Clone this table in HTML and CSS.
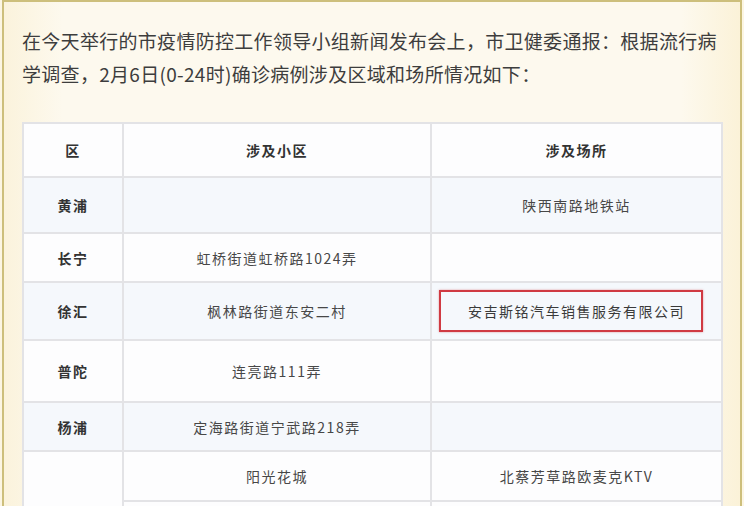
FILE: index.html
```html
<!DOCTYPE html>
<html lang="zh-CN">
<head>
    <meta charset="UTF-8">
    <meta name="viewport" content="width=device-width, initial-scale=1.0">
    <title>确诊病例涉及区域和场所</title>
    <link rel="stylesheet" href="styles.css">
</head>
<body>
    <!-- Framed article -->
    <div class="frame">
        <p class="intro">在今天举行的市疫情防控工作领导小组新闻发布会上，市卫健委通报：根据流行病学调查，2月6日(0-24时)确诊病例涉及区域和场所情况如下：</p>

        <table class="cases">
            <tr class="row-head">
                <th class="col-district">区</th>
                <th class="col-area">涉及小区</th>
                <th class="col-place">涉及场所</th>
            </tr>
            <tr class="row-1 alt">
                <td class="district">黄浦</td>
                <td></td>
                <td>陕西南路地铁站</td>
            </tr>
            <tr class="row-2">
                <td class="district">长宁</td>
                <td>虹桥街道虹桥路1024弄</td>
                <td></td>
            </tr>
            <tr class="row-3 alt">
                <td class="district">徐汇</td>
                <td>枫林路街道东安二村</td>
                <td><span class="marked">安吉斯铭汽车销售服务有限公司</span></td>
            </tr>
            <tr class="row-4">
                <td class="district">普陀</td>
                <td>连亮路111弄</td>
                <td></td>
            </tr>
            <tr class="row-5 alt">
                <td class="district">杨浦</td>
                <td>定海路街道宁武路218弄</td>
                <td></td>
            </tr>
            <tr class="row-6">
                <td class="district" rowspan="2"></td>
                <td>阳光花城</td>
                <td>北蔡芳草路欧麦克KTV</td>
            </tr>
            <tr class="row-7">
                <td>&nbsp;</td>
                <td>&nbsp;</td>
            </tr>
        </table>
    </div>
</body>
</html>
```

FILE: styles.css
```css
/* Reset */
* {
    margin: 0;
    padding: 0;
    box-sizing: border-box;
}

body {
    font-family: "Noto Sans CJK SC", "Noto Sans", sans-serif;
    background-color: #fcf6e4;
    color: #333;
    height: 100vh;
    overflow: hidden;
}

/* Golden frame round the article */
.frame {
    margin: 0 2px;
    height: 100vh;
    overflow: hidden;
    border: 2px solid #cdbf7c;
    border-bottom: none;
    background: linear-gradient(90deg, #fbf3dc 0%, #fdf9ee 8%, #fdf9ee 92%, #fbf2d8 100%);
    padding: 22px 19px 0 18px;
}

/* Intro paragraph */
.intro {
    width: 700px;
    font-size: 19px;
    line-height: 33px;
    letter-spacing: 0.3px;
    color: #3d3d3d;
}

/* Table */
.cases {
    margin-top: 32px;
    width: 699px;
    border-collapse: collapse;
    table-layout: fixed;
    background-color: #fdfdfe;
    font-size: 14px;
    letter-spacing: 1.5px;
    color: #474747;
}

.cases th,
.cases td {
    border: 2px solid #e3e3e6;
    text-align: center;
    vertical-align: middle;
    font-weight: normal;
}

.cases th,
.cases .district {
    font-weight: bold;
    color: #333;
}

.col-district { width: 100px; }
.col-area { width: 308px; }
.col-place { width: 291px; }

.cases .alt td {
    background-color: #f5f8fc;
}

.row-6 td.district {
    background-color: #fdfdfe;
}

.row-head { height: 54px; }
.row-1 { height: 56px; }
.row-2 { height: 49px; }
.row-3 { height: 58px; }
.row-4 { height: 62px; }
.row-5 { height: 49px; }
.row-6 { height: 50px; }
.row-7 { height: 40px; }

/* Red annotation box */
.marked {
    display: inline-block;
    width: 264px;
    height: 42px;
    line-height: 38px;
    margin-right: 12px;
    padding-left: 12px;
    border: 2px solid #d03a42;
    box-shadow: 0 0 2px rgba(208, 58, 66, 0.5);
    color: #3a3a3a;
}
```
